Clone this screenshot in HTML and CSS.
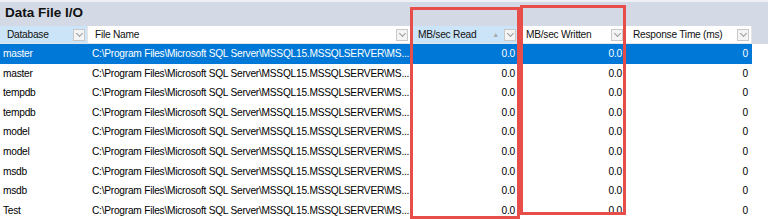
FILE: index.html
```html
<!DOCTYPE html>
<html lang="en">

<head>
    <meta charset="UTF-8">
    <title>Data File I/O</title>
    <link rel="stylesheet" href="styles.css">
</head>

<body>

    <div class="panel">
        <div class="title">Data File I/O</div>

        <div class="grid">
            <div class="head active">Database<span class="drop"></span></div>
            <div class="head">File Name<span class="drop"></span></div>
            <div class="head active">MB/sec Read<span class="sort">&#9650;</span><span class="drop"></span></div>
            <div class="head">MB/sec Written<span class="drop"></span></div>
            <div class="head">Response Time (ms)<span class="drop"></span></div>
            <div class="filler"></div>

            <div class="row selected">
                <div>master</div><div>C:\Program Files\Microsoft SQL Server\MSSQL15.MSSQLSERVER\MS...</div><div class="num">0.0</div><div class="num">0.0</div><div class="num">0</div>
            </div>
            <div class="row">
                <div>master</div><div>C:\Program Files\Microsoft SQL Server\MSSQL15.MSSQLSERVER\MS...</div><div class="num">0.0</div><div class="num">0.0</div><div class="num">0</div>
            </div>
            <div class="row">
                <div>tempdb</div><div>C:\Program Files\Microsoft SQL Server\MSSQL15.MSSQLSERVER\MS...</div><div class="num">0.0</div><div class="num">0.0</div><div class="num">0</div>
            </div>
            <div class="row">
                <div>tempdb</div><div>C:\Program Files\Microsoft SQL Server\MSSQL15.MSSQLSERVER\MS...</div><div class="num">0.0</div><div class="num">0.0</div><div class="num">0</div>
            </div>
            <div class="row">
                <div>model</div><div>C:\Program Files\Microsoft SQL Server\MSSQL15.MSSQLSERVER\MS...</div><div class="num">0.0</div><div class="num">0.0</div><div class="num">0</div>
            </div>
            <div class="row">
                <div>model</div><div>C:\Program Files\Microsoft SQL Server\MSSQL15.MSSQLSERVER\MS...</div><div class="num">0.0</div><div class="num">0.0</div><div class="num">0</div>
            </div>
            <div class="row">
                <div>msdb</div><div>C:\Program Files\Microsoft SQL Server\MSSQL15.MSSQLSERVER\MS...</div><div class="num">0.0</div><div class="num">0.0</div><div class="num">0</div>
            </div>
            <div class="row">
                <div>msdb</div><div>C:\Program Files\Microsoft SQL Server\MSSQL15.MSSQLSERVER\MS...</div><div class="num">0.0</div><div class="num">0.0</div><div class="num">0</div>
            </div>
            <div class="row">
                <div>Test</div><div>C:\Program Files\Microsoft SQL Server\MSSQL15.MSSQLSERVER\MS...</div><div class="num">0.0</div><div class="num">0.0</div><div class="num">0</div>
            </div>
        </div>

        <div class="mark mark-read"></div>
        <div class="mark mark-written"></div>
    </div>

</body>

</html>
```

FILE: styles.css
```css
body {
    margin: 0;
    background: #fff;
    font-family: "Liberation Sans", Arial, sans-serif;
    font-size: 10.2px;
    color: #000;
    overflow: hidden;
}

.panel {
    position: relative;
    width: 768px;
    height: 219px;
    background: #fff;
}

.title {
    height: 24px;
    border-top: 2px solid #eef0f5;
    background: #d3d9e5;
    padding-left: 5px;
    font-size: 13.5px;
    font-weight: bold;
    line-height: 22px;
    color: #111;
}

.grid {
    display: grid;
    grid-template-columns: 88px 323px 108px 107px 126px 16px;
    letter-spacing: -0.25px;
}

.row {
    display: contents;
}

.row::after {
    content: "";
}

.head {
    position: relative;
    height: 17px;
    line-height: 17px;
    padding-left: 7px;
    background: #fff;
    border-right: 1px solid #e5e5e5;
    border-bottom: 1px solid #e5e5e5;
    color: #111;
}

.head.active {
    background: #cce4f7;
}

.filler {
    background: #d3d9e5;
}

.drop {
    position: absolute;
    right: 2px;
    top: 3px;
    width: 10px;
    height: 10px;
    border: 1px solid #c8c8c8;
    background: #f4f4f4;
}

.drop::after {
    content: "";
    position: absolute;
    left: 3px;
    top: 1px;
    width: 4px;
    height: 4px;
    border-right: 1px solid #999;
    border-bottom: 1px solid #999;
    transform: rotate(45deg);
}

.sort {
    position: absolute;
    right: 19px;
    top: 0;
    font-size: 7px;
    color: #aaa;
}

.row > div {
    height: 19.6px;
    line-height: 19.6px;
    padding: 0 3px;
    white-space: nowrap;
    overflow: hidden;
}

.row > div:nth-child(2) {
    padding-left: 4px;
}

.row .num {
    text-align: right;
    padding-right: 4px;
}

.row.selected > div {
    background: #0078d7;
    color: #fff;
}

.mark {
    position: absolute;
    border: 3px solid #e84e49;
}

.mark-read {
    left: 410px;
    top: 7px;
    width: 104px;
    height: 206px;
}

.mark-written {
    left: 520px;
    top: 5px;
    width: 100px;
    height: 204px;
}
```
